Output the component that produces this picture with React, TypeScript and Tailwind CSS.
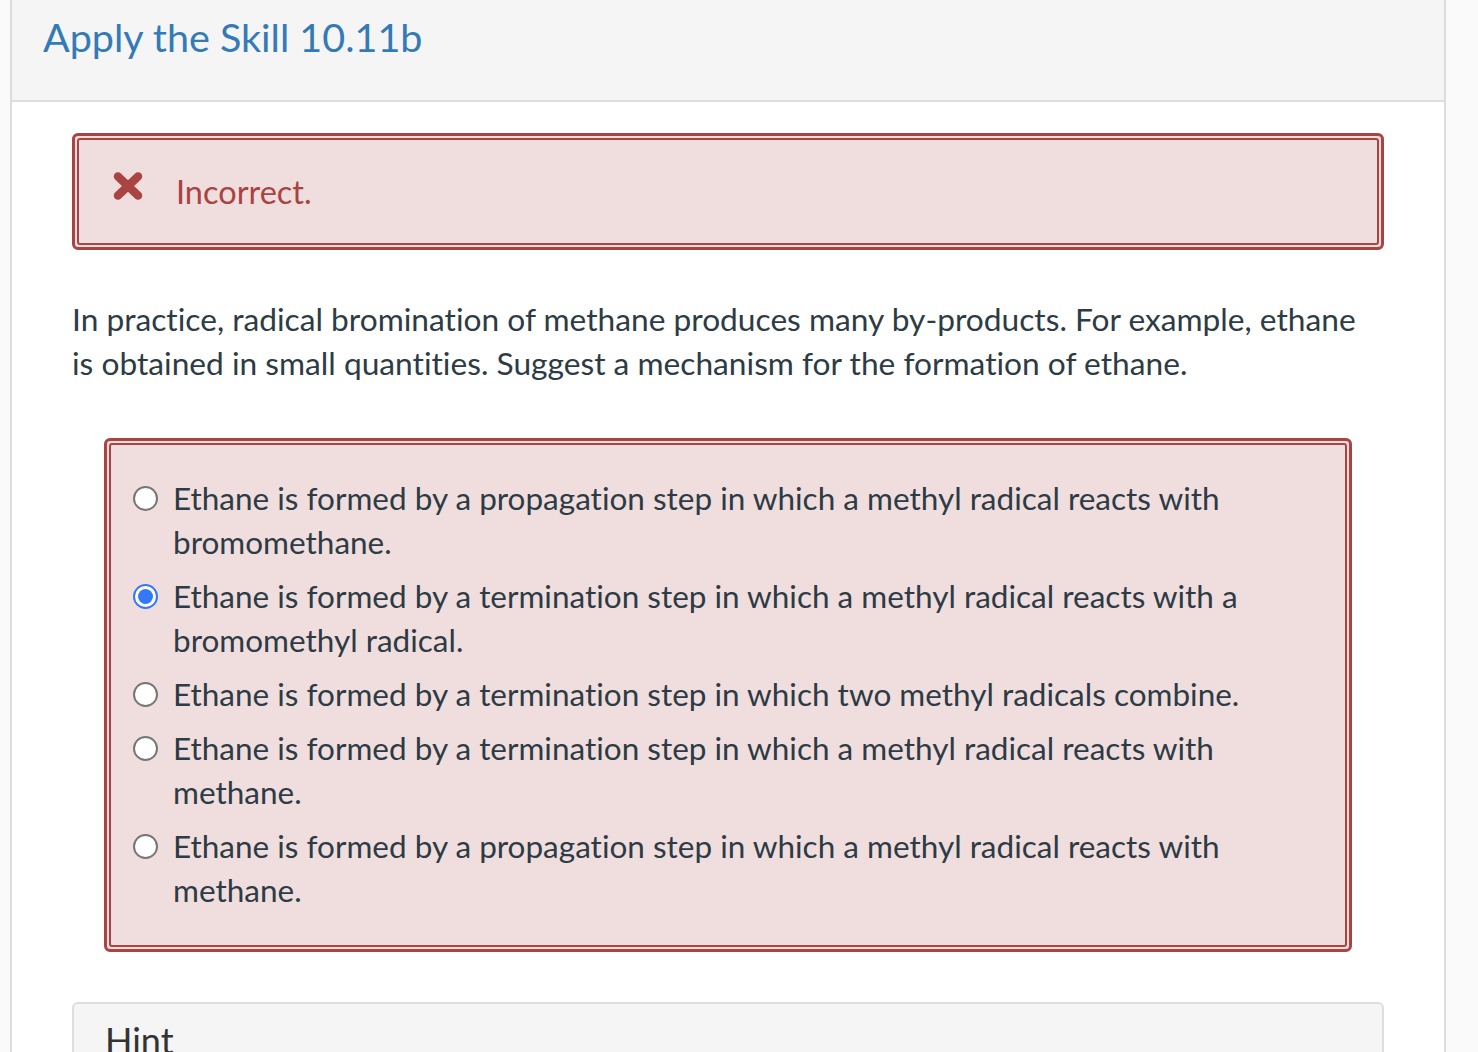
import React from 'react';

const options = [
  'Ethane is formed by a propagation step in which a methyl radical reacts with bromomethane.',
  'Ethane is formed by a termination step in which a methyl radical reacts with a bromomethyl radical.',
  'Ethane is formed by a termination step in which two methyl radicals combine.',
  'Ethane is formed by a termination step in which a methyl radical reacts with methane.',
  'Ethane is formed by a propagation step in which a methyl radical reacts with methane.',
];

function Radio({ checked }: { checked: boolean }) {
  if (checked) {
    return (
      <span className="mt-[10px] flex h-[25px] w-[25px] shrink-0 items-center justify-center rounded-full border-2 border-[#3478f6] bg-white">
        <span className="h-[15px] w-[15px] rounded-full bg-[#3478f6]" />
      </span>
    );
  }
  return <span className="mt-[10px] h-[25px] w-[25px] shrink-0 rounded-full border-2 border-[#767676] bg-white" />;
}

export default function App() {
  const selected = 1;

  return (
    <div
      className="flex min-h-[1052px] bg-[#fafafa] pl-[10px] pr-[32px] [font-variant-ligatures:none]"
      style={{ fontFamily: 'Lato, "Open Sans", sans-serif' }}
    >
      <div className="flex-1 border-x-2 border-[#dddddd] bg-white">
        {/* Header */}
        <div className="h-[102px] border-b-2 border-[#dddddd] bg-[#f5f5f5] pl-[31px] pt-[11px]">
          <h1 className="text-[39.5px] leading-[52px] text-[#337ab7]">Apply the Skill 10.11b</h1>
        </div>

        <div className="px-[60px] pt-[31px]">
          {/* Feedback */}
          <div className="rounded-[6px] border-[3px] border-[#a94442] bg-[#f0dede] p-[2px]">
            <div className="flex h-[107px] items-center rounded-[3px] border-2 border-[#a94442] pl-[34px]">
              <svg width="30" height="28" viewBox="0 0 30 28" className="-mt-[12px] shrink-0">
                <path d="M5 4.5 L25 23.5 M25 4.5 L5 23.5" stroke="#a94442" strokeWidth="8.5" strokeLinecap="round" />
              </svg>
              <span className="ml-[33px] text-[32.5px] leading-[40px] text-[#a94442]">Incorrect.</span>
            </div>
          </div>

          {/* Question */}
          <p className="mt-[47px] pr-[24px] text-[31.7px] leading-[44px] text-[#2d3b45]">
            In practice, radical bromination of methane produces many by-products. For example, ethane is obtained in small quantities. Suggest a mechanism for the formation of ethane.
          </p>

          {/* Options */}
          <div className="mx-[32px] mt-[53px] rounded-[6px] border-[3px] border-[#a94442] bg-[#f0dede] p-[2px]">
            <div className="flex flex-col gap-[10px] rounded-[3px] border-2 border-[#a94442] pb-[33px] pl-[22px] pr-[40px] pt-[31px]">
              {options.map((o, i) => (
                <label key={i} className="flex gap-[15px]">
                  <Radio checked={i === selected} />
                  <span className="text-[31.5px] leading-[44px] text-[#2d3b45]">{o}</span>
                </label>
              ))}
            </div>
          </div>

          {/* Hint */}
          <div className="mt-[50px] h-[120px] rounded-t-[6px] border-2 border-[#dddddd] bg-[#f5f5f5] pl-[31px] pt-[14px]">
            <span className="text-[36px] leading-[44px] text-[#333333]">Hint</span>
          </div>
        </div>
      </div>
    </div>
  );
}
